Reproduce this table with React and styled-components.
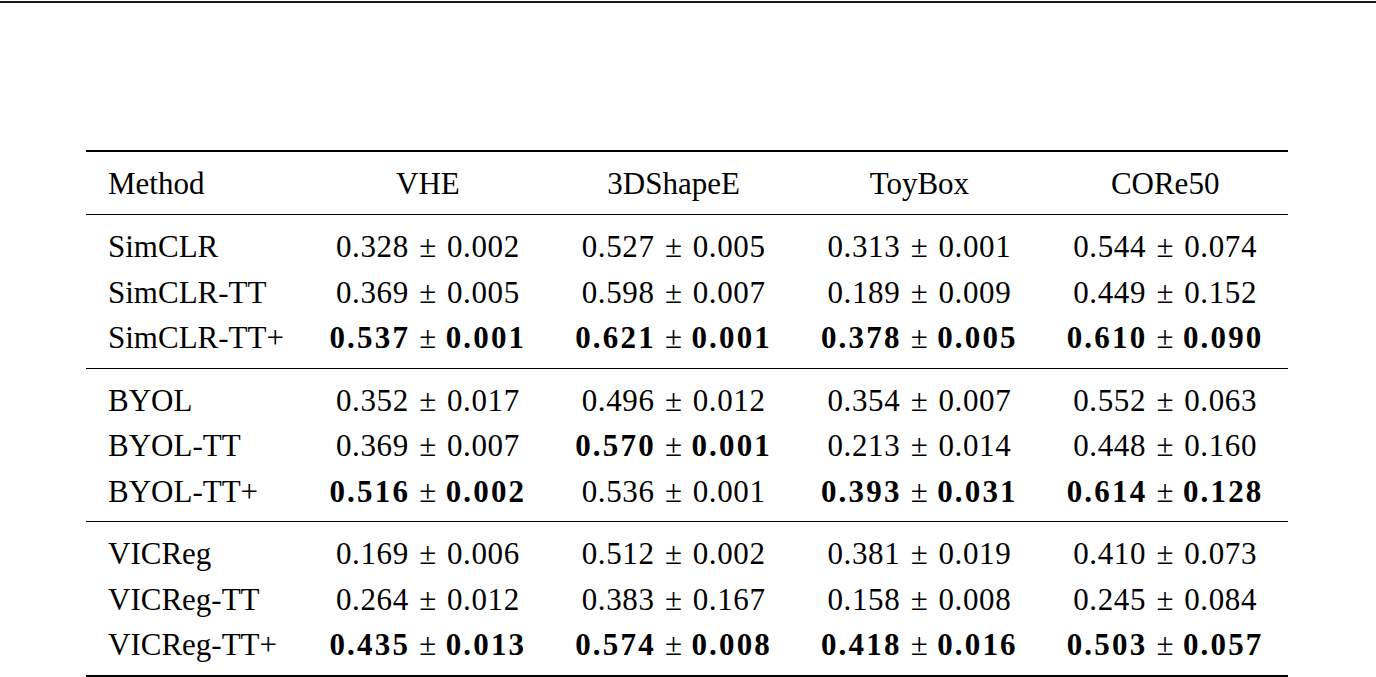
import React from 'react'
import styled, { createGlobalStyle } from 'styled-components'

const GlobalStyle = createGlobalStyle`
  html, body {
    margin: 0;
    padding: 0;
    background: #fff;
  }
  body {
    font-family: "Liberation Serif", "Times New Roman", serif;
    color: #000;
  }
`;

const Page = styled.div`
  width: 1376px;
  height: 677px;
  overflow: hidden;
  background: #fff;
`;

const PageRule = styled.div`
  margin-top: 1px;
  height: 2px;
  background: #1a1a1a;
`;

const Table = styled.div`
  width: 1202px;
  margin: 147px 0 0 86px;
  border-top: 2.5px solid #000;
  border-bottom: 2.5px solid #000;
`;

const Row = styled.div`
  display: grid;
  grid-template-columns: 219px repeat(4, 1fr);
  align-items: center;
  height: ${props => props.tall ? '62px' : '45.5px'};
  font-size: 31px;
  line-height: 1;
`;

const Group = styled.div`
  border-top: 1.5px solid #000;
  padding: 9px 0 7px;
`;

const Name = styled.div`
  padding-left: 22px;
  white-space: nowrap;
`;

const Head = styled.div`
  text-align: center;
  white-space: nowrap;
`;

const Cell = styled.div`
  text-align: center;
  white-space: nowrap;
  font-size: 31px;
  font-weight: ${props => props.best ? 700 : 400};
  letter-spacing: ${props => props.best ? '0.07em' : '0.02em'};
`;

const Pm = styled.span`
  font-weight: 400;
  letter-spacing: 0;
  margin: 0 ${props => props.best ? '0.3em' : '0.34em'};
`;

const groups = [
  [
    ['SimCLR', ['0.328', '0.002'], ['0.527', '0.005'], ['0.313', '0.001'], ['0.544', '0.074']],
    ['SimCLR-TT', ['0.369', '0.005'], ['0.598', '0.007'], ['0.189', '0.009'], ['0.449', '0.152']],
    ['SimCLR-TT+', ['0.537', '0.001', 1], ['0.621', '0.001', 1], ['0.378', '0.005', 1], ['0.610', '0.090', 1]],
  ],
  [
    ['BYOL', ['0.352', '0.017'], ['0.496', '0.012'], ['0.354', '0.007'], ['0.552', '0.063']],
    ['BYOL-TT', ['0.369', '0.007'], ['0.570', '0.001', 1], ['0.213', '0.014'], ['0.448', '0.160']],
    ['BYOL-TT+', ['0.516', '0.002', 1], ['0.536', '0.001'], ['0.393', '0.031', 1], ['0.614', '0.128', 1]],
  ],
  [
    ['VICReg', ['0.169', '0.006'], ['0.512', '0.002'], ['0.381', '0.019'], ['0.410', '0.073']],
    ['VICReg-TT', ['0.264', '0.012'], ['0.383', '0.167'], ['0.158', '0.008'], ['0.245', '0.084']],
    ['VICReg-TT+', ['0.435', '0.013', 1], ['0.574', '0.008', 1], ['0.418', '0.016', 1], ['0.503', '0.057', 1]],
  ],
];

const Value = ({ v }) => {
  const [mean, sd, best] = v;
  return (
    <Cell best={!!best}>
      {mean}<Pm best={!!best}>±</Pm>{sd}
    </Cell>
  );
};

export default function App() {
  return (
    <Page>
      <GlobalStyle />
      <PageRule />
      <Table>
        <Row tall>
          <Name>Method</Name>
          <Head>VHE</Head>
          <Head>3DShapeE</Head>
          <Head>ToyBox</Head>
          <Head>CORe50</Head>
        </Row>
        {groups.map((g, gi) => (
          <Group key={gi}>
            {g.map(([name, ...vals]) => (
              <Row key={name}>
                <Name>{name}</Name>
                {vals.map((v, i) => <Value key={i} v={v} />)}
              </Row>
            ))}
          </Group>
        ))}
      </Table>
    </Page>
  );
}
